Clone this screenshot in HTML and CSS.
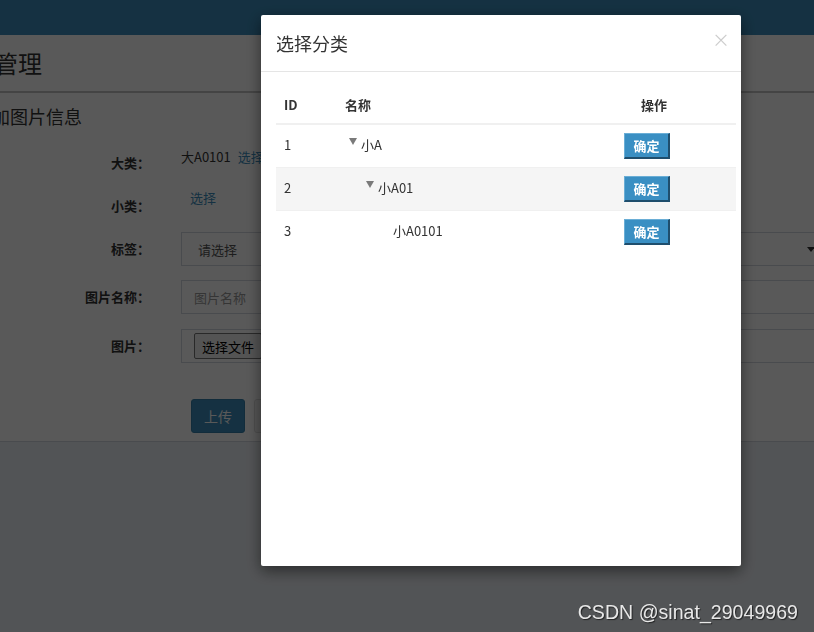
FILE: index.html
```html
<!DOCTYPE html>
<html lang="zh-CN">
<head>
<meta charset="utf-8">
<title>选择分类</title>
<link rel="stylesheet" href="styles.css">
</head>
<body>
<div class="page">
  <header class="navbar"></header>
  <section class="content-header">
    <h1 class="page-title">图片管理</h1>
  </section>
  <section class="panel">
    <h3 class="panel-title">添加图片信息</h3>
    <form class="form">
      <div class="row row-static">
        <label class="label">大类：</label>
        <div class="value value-1">大A0101 <a class="link">选择</a></div>
      </div>
      <div class="row row-static">
        <label class="label">小类：</label>
        <div class="value value-2"><a class="link">选择</a></div>
      </div>
      <div class="row row-tag">
        <label class="label">标签：</label>
        <div class="control select">请选择<span class="caret-down"></span></div>
      </div>
      <div class="row row-name">
        <label class="label">图片名称：</label>
        <div class="control placeholder">图片名称</div>
      </div>
      <div class="row row-file">
        <label class="label">图片：</label>
        <div class="control file"><span class="file-btn">选择文件</span></div>
      </div>
      <div class="row row-buttons">
        <span class="label"></span>
        <div class="buttons">
          <span class="btn btn-primary">上传</span>
          <span class="btn btn-default">重置</span>
        </div>
      </div>
    </form>
  </section>
</div>

<div class="backdrop"></div>

<div class="modal">
  <div class="modal-header">
    <h4 class="modal-title">选择分类</h4>
    <span class="close">×</span>
  </div>
  <div class="modal-body">
    <table class="table">
      <thead>
        <tr>
          <th class="col-id">ID</th>
          <th class="col-name">名称</th>
          <th class="col-op">操作</th>
        </tr>
      </thead>
      <tbody>
        <tr>
          <td>1</td>
          <td><span class="node lvl1"><span class="tri"></span>小A</span></td>
          <td class="op"><span class="ok-btn">确定</span></td>
        </tr>
        <tr class="striped">
          <td>2</td>
          <td><span class="node lvl2"><span class="tri"></span>小A01</span></td>
          <td class="op"><span class="ok-btn">确定</span></td>
        </tr>
        <tr>
          <td>3</td>
          <td><span class="node lvl3">小A0101</span></td>
          <td class="op"><span class="ok-btn">确定</span></td>
        </tr>
      </tbody>
    </table>
  </div>
</div>

<div class="watermark">CSDN @sinat_29049969</div>
</body>
</html>
```

FILE: styles.css
```css
html, body {
  margin: 0;
  padding: 0;
  overflow: hidden;
  height: 100%;
}
body {
  background: #ecf0f5;
  font-family: "Noto Sans CJK SC", "Liberation Sans", sans-serif;
  font-size: 13px;
  color: #333;
}
.page {
  width: 826px;
}
.navbar {
  height: 35px;
  background: #3c8dbc;
}
.content-header {
  height: 56px;
  background: #fff;
  border-bottom: 2px solid #c4c4c4;
  display: flex;
  align-items: center;
}
.page-title {
  margin: 0 0 0 -54px;
  font-size: 24px;
  font-weight: normal;
  line-height: 30px;
  color: #333;
}
.panel {
  background: #fff;
  border-bottom: 1px solid #d2d6de;
  padding: 12px 0 8px 0;
}
.panel-title {
  margin: 0 0 19px -26px;
  font-size: 18px;
  font-weight: normal;
  line-height: 22px;
  color: #333;
}
.form {
  display: flex;
  flex-direction: column;
}
.row {
  display: grid;
  grid-template-columns: 150px 1fr;
  column-gap: 31px;
  height: 34px;
  align-items: center;
}
.row-static { margin-bottom: 9px; }
.row-tag { margin-bottom: 14px; }
.row-name { margin-bottom: 15px; }
.row-file { margin-bottom: 36px; }
.label {
  text-align: right;
  font-weight: bold;
  color: #333;
  line-height: 20px;
}
.value {
  align-self: start;
  line-height: 20px;
  color: #333;
}
.value-1 { margin-top: 1px; }
.value-2 { margin-top: -1px; padding-left: 9px; }
.link {
  color: #3c8dbc;
  margin-left: 4px;
}
.value-2 .link { margin-left: 0; }
.control {
  height: 32px;
  border: 1px solid #d2d6de;
  box-sizing: content-box;
  display: flex;
  align-items: center;
  position: relative;
}
.select { padding-left: 16px; color: #555; }
.caret-down {
  position: absolute;
  right: 10px;
  top: 14px;
  width: 0;
  height: 0;
  border-left: 4px solid transparent;
  border-right: 4px solid transparent;
  border-top: 5px solid #333;
}
.placeholder { padding-left: 12px; color: #999; }
.file { padding-left: 12px; }
.file-btn {
  display: inline-flex;
  align-items: center;
  height: 24px;
  padding: 0 7px;
  border: 1px solid #767676;
  border-radius: 2px;
  background: #efefef;
  color: #000;
  font-size: 13px;
}
.buttons {
  display: flex;
  gap: 9px;
  padding-left: 10px;
}
.btn {
  display: inline-flex;
  align-items: center;
  justify-content: center;
  height: 34px;
  box-sizing: border-box;
  padding: 0 12px;
  border-radius: 3px;
  font-size: 14px;
}
.btn-primary {
  background: #3c8dbc;
  border: 1px solid #367fa9;
  color: #fff;
  width: 54px;
}
.btn-default {
  background: #f4f4f4;
  border: 1px solid #ddd;
  color: #444;
}

.backdrop {
  position: fixed;
  inset: 0;
  background: rgba(0, 0, 0, 0.65);
}

.modal {
  position: fixed;
  left: 261px;
  top: 15px;
  width: 480px;
  height: 551px;
  background: #fff;
  border-radius: 2px;
  box-shadow: 0 5px 15px rgba(0, 0, 0, 0.5);
  font-family: "Noto Sans CJK SC", "Liberation Sans", sans-serif;
}
.modal-header {
  padding: 15px;
  border-bottom: 1px solid #e5e5e5;
  display: flex;
  justify-content: space-between;
  align-items: center;
}
.modal-title {
  margin: 0;
  font-size: 18px;
  font-weight: normal;
  line-height: 26px;
  color: #333;
}
.close {
  font-size: 18px;
  line-height: 20px;
  color: #000;
  opacity: 0.2;
  margin-right: -4px;
  margin-top: -8px;
}
.modal-body {
  padding: 15px 5px 15px 15px;
}
.table {
  width: 460px;
  border-collapse: collapse;
  border-spacing: 0;
  font-size: 13px;
  color: #333;
}
.table th {
  text-align: left;
  font-weight: bold;
  padding: 8px;
  line-height: 20px;
  border-bottom: 2px solid #f0f0f0;
}
.col-id { width: 45px; }
.col-name { width: 263px; }
.col-op { padding-left: 25px !important; }
.table td {
  padding: 10px 8px 8px 8px;
  line-height: 20px;
  vertical-align: top;
  border-top: 1px solid #f0f0f0;
}
.table td.op {
  padding-top: 8px;
  padding-bottom: 8px;
}
.striped td { background: #f5f5f5; }
.node {
  display: inline-block;
}
.lvl1 { padding-left: 4px; }
.lvl2 { padding-left: 21px; }
.lvl3 { padding-left: 48px; }
.tri {
  display: inline-block;
  width: 0;
  height: 0;
  border-left: 4px solid transparent;
  border-right: 4px solid transparent;
  border-top: 7px solid #7a7a7a;
  margin-right: 4px;
  vertical-align: 5px;
}
.ok-btn {
  display: inline-flex;
  align-items: center;
  justify-content: center;
  width: 46px;
  height: 26px;
  box-sizing: border-box;
  background: #3a8fc3;
  border-top: 1px solid #6aaed6;
  border-left: 1px solid #6aaed6;
  border-right: 2px solid #1f4e6d;
  border-bottom: 2px solid #1f4e6d;
  color: #fff;
  font-size: 13px;
  font-weight: bold;
  line-height: 1;
}

.watermark {
  position: fixed;
  right: 16px;
  bottom: 8px;
  font-family: "Liberation Sans", Arial, sans-serif;
  font-size: 19.6px;
  color: #e8e8e8;
  text-shadow: 1px 1px 1px rgba(0, 0, 0, 0.6);
}
```
